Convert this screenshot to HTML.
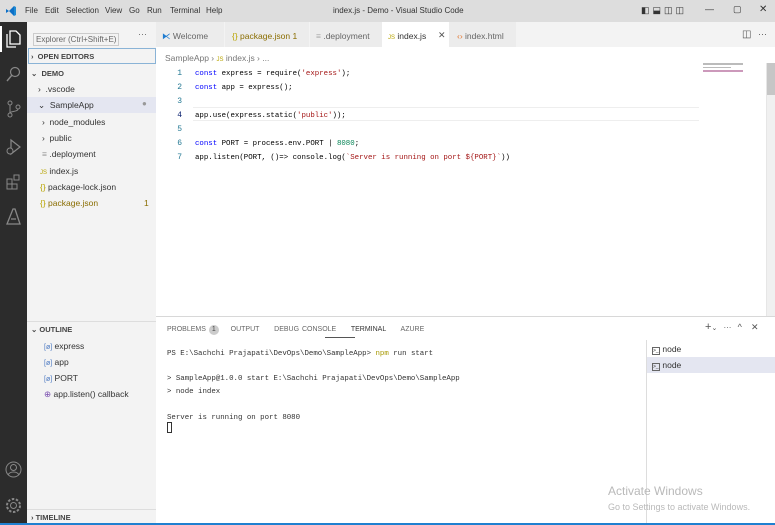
<!DOCTYPE html><html><head><style>
*{margin:0;padding:0;box-sizing:border-box}
body{width:775px;height:525px;overflow:hidden;background:#fff;font-family:"Liberation Sans",sans-serif;font-size:9px;color:#333;position:relative}
.a{position:absolute;white-space:nowrap}
.mono{font-family:"Liberation Mono",monospace;font-size:7.4px}
.kw{color:#0000ff}.str{color:#a31515}.num{color:#098658}
.m{position:absolute;top:6px;font-size:8px;color:#333}
</style></head><body>
<!-- title bar -->
<div class="a" style="left:0;top:0;width:775px;height:22px;background:#dddddd"></div>
<svg class="a" style="left:5px;top:5px" width="12" height="12" viewBox="0 0 12 12"><path d="M9 1L4 6l5 5V1zM1 4l3 2-3 2z" fill="#0b6fc7"/><path d="M9 1l2 1v8l-2 1" fill="#1f8ad2"/></svg>
<span class="m" style="left:25px">File</span><span class="m" style="left:45px">Edit</span><span class="m" style="left:66px">Selection</span><span class="m" style="left:105px">View</span><span class="m" style="left:129px">Go</span><span class="m" style="left:147px">Run</span><span class="m" style="left:170px">Terminal</span><span class="m" style="left:206px">Help</span>
<div class="a" style="left:333px;top:6px;font-size:8px">index.js - Demo - Visual Studio Code</div>
<div class="a" style="left:641px;top:5px;font-size:9px;color:#333;letter-spacing:3px">◧⬓◫◫</div>
<div class="a" style="left:705px;top:4px;font-size:9px">—</div>
<div class="a" style="left:733px;top:4px;font-size:9px">▢</div>
<div class="a" style="left:759px;top:4px;font-size:10px">✕</div>
<!-- activity bar -->
<div class="a" style="left:0;top:22px;width:27px;height:503px;background:#2c2c2c"></div>
<div class="a" style="left:0;top:26px;width:2px;height:26px;background:#fff"></div>
<svg class="a" style="left:6px;top:30px" width="15" height="18"><path d="M4 1h6l4 4v9H4z M1 4v13h9" fill="none" stroke="#fff" stroke-width="1.3"/></svg>
<svg class="a" style="left:6px;top:66px" width="15" height="16"><circle cx="9" cy="6" r="4.5" fill="none" stroke="#888" stroke-width="1.2"/><path d="M6 9l-5 6" stroke="#888" stroke-width="1.4"/></svg>
<svg class="a" style="left:6px;top:100px" width="15" height="18"><circle cx="4" cy="3" r="2" fill="none" stroke="#888"/><circle cx="4" cy="15" r="2" fill="none" stroke="#888"/><circle cx="12" cy="7" r="2" fill="none" stroke="#888"/><path d="M4 5v8M12 9c0 3-8 2-8 4" fill="none" stroke="#888"/></svg>
<svg class="a" style="left:6px;top:138px" width="15" height="18"><path d="M5 2l9 7-9 7z" fill="none" stroke="#888" stroke-width="1.2"/><circle cx="4" cy="13" r="3" fill="#2c2c2c" stroke="#888"/></svg>
<svg class="a" style="left:6px;top:174px" width="15" height="16"><path d="M1 5h5v5H1zM1 10h5v5H1zM6 10h5v5H6zM8 1h5v5H8z" fill="none" stroke="#888"/></svg>
<svg class="a" style="left:6px;top:208px" width="15" height="18"><path d="M1 16L7 1h2l5 15zM5 11h5" fill="none" stroke="#888" stroke-width="1.3"/></svg>
<svg class="a" style="left:5px;top:461px" width="17" height="17"><circle cx="8.5" cy="8.5" r="7.5" fill="none" stroke="#888"/><circle cx="8.5" cy="6.5" r="3" fill="none" stroke="#888"/><path d="M3 14c2-4 9-4 11 0" fill="none" stroke="#888"/></svg>
<svg class="a" style="left:5px;top:497px" width="17" height="17"><circle cx="8.5" cy="8.5" r="3" fill="none" stroke="#888"/><circle cx="8.5" cy="8.5" r="6.5" fill="none" stroke="#888" stroke-dasharray="2.5 1.6" stroke-width="2"/></svg>
<!-- sidebar -->
<div class="a" style="left:27px;top:22px;width:129px;height:503px;background:#f3f3f3"></div>
<div class="a" style="left:33px;top:33px;font-size:8px;color:#666;background:#f3f3f3;border:1px solid #ccc;padding:1px 2px">Explorer (Ctrl+Shift+E)</div>
<div class="a" style="left:138px;top:29px;color:#666">···</div>
<div class="a" style="left:28px;top:48px;width:128px;height:16px;border:1px solid #8ab3d6"></div>
<div class="a" style="left:31px;top:52px;font-size:7.5px;font-weight:bold;color:#444">›&nbsp; OPEN EDITORS</div>
<div class="a" style="left:31px;top:69px;font-size:7.5px;font-weight:bold;color:#444">⌄&nbsp; DEMO</div>
<div class="a" style="left:38px;top:84px;font-size:8.5px">›&nbsp; .vscode</div>
<div class="a" style="left:27px;top:97px;width:129px;height:16px;background:#e4e6f1"></div>
<div class="a" style="left:38px;top:100px;font-size:8.5px">⌄&nbsp; SampleApp</div>
<div class="a" style="left:142px;top:99px;font-size:8px;color:#999">●</div>
<div class="a" style="left:42px;top:117px;font-size:8.5px">›&nbsp; node_modules</div>
<div class="a" style="left:42px;top:133px;font-size:8.5px">›&nbsp; public</div>
<div class="a" style="left:42px;top:149px;font-size:8.5px"><span style="color:#999">≡</span> .deployment</div>
<div class="a" style="left:40px;top:166px;font-size:8.5px"><span style="color:#b8a400;font-size:6px">JS</span> index.js</div>
<div class="a" style="left:40px;top:182px;font-size:8.5px"><span style="color:#b8a400">{}</span> package-lock.json</div>
<div class="a" style="left:40px;top:198px;font-size:8.5px;color:#8a6d00"><span style="color:#b8a400">{}</span> package.json</div>
<div class="a" style="left:144px;top:198px;font-size:8.5px;color:#8a6d00">1</div>
<div class="a" style="left:27px;top:321px;width:129px;height:1px;background:#ddd"></div>
<div class="a" style="left:31px;top:325px;font-size:7.5px;font-weight:bold;color:#444">⌄ OUTLINE</div>
<div class="a" style="left:44px;top:341px;font-size:8.5px"><span style="color:#4d7ac2;font-size:7px">[ø]</span> express</div>
<div class="a" style="left:44px;top:357px;font-size:8.5px"><span style="color:#4d7ac2;font-size:7px">[ø]</span> app</div>
<div class="a" style="left:44px;top:373px;font-size:8.5px"><span style="color:#4d7ac2;font-size:7px">[ø]</span> PORT</div>
<div class="a" style="left:44px;top:389px;font-size:8.5px"><span style="color:#7a4fb0">⊕</span> app.listen() callback</div>
<div class="a" style="left:27px;top:509px;width:129px;height:1px;background:#ddd"></div>
<div class="a" style="left:31px;top:513px;font-size:7.5px;font-weight:bold;color:#444">› TIMELINE</div>
<!-- tabs -->
<div class="a" style="left:156px;top:22px;width:619px;height:25px;background:#f3f3f3"></div>
<div class="a" style="left:156px;top:22px;width:69px;height:25px;background:#ececec;border-right:1px solid #f3f3f3"></div>
<div class="a" style="left:162px;top:31px;font-size:8.5px;color:#666"><span style="color:#1f7cd0">⧔</span> Welcome</div>
<div class="a" style="left:225px;top:22px;width:85px;height:25px;background:#ececec;border-right:1px solid #f3f3f3"></div>
<div class="a" style="left:232px;top:31px;font-size:8.5px;color:#8a6d00"><span style="color:#b8a400">{}</span> package.json 1</div>
<div class="a" style="left:310px;top:22px;width:72px;height:25px;background:#ececec"></div>
<div class="a" style="left:316px;top:31px;font-size:8.5px;color:#666"><span style="color:#aaa">≡</span> .deployment</div>
<div class="a" style="left:382px;top:22px;width:67px;height:25px;background:#fff"></div>
<div class="a" style="left:388px;top:31px;font-size:8.5px;color:#333"><span style="color:#b8a400;font-size:6px">JS</span> index.js</div>
<div class="a" style="left:438px;top:30px;font-size:9px;color:#555">✕</div>
<div class="a" style="left:449px;top:22px;width:67px;height:25px;background:#ececec"></div>
<div class="a" style="left:457px;top:31px;font-size:8.5px;color:#666"><span style="color:#e37933">‹›</span> index.html</div>
<div class="a" style="left:742px;top:29px;font-size:10px;color:#555">◫</div>
<div class="a" style="left:758px;top:29px;color:#555">···</div>
<!-- editor -->
<div class="a" style="left:165px;top:53px;font-size:8.5px;color:#777">SampleApp › <span style="color:#b8a400;font-size:6px">JS</span> index.js › ...</div>
<div class="a mono" style="left:174px;top:67px;line-height:14px;color:#237893;text-align:right;width:8px;font-size:8px">1<br>2<br>3<br><span style="color:#0b216f">4</span><br>5<br>6<br>7</div>
<div class="a" style="left:193px;top:107px;width:506px;height:14px;border-top:1px solid #eee;border-bottom:1px solid #eee"></div>
<div class="a mono" style="left:195px;top:67px;line-height:14px;color:#000">
<span class="kw">const</span> express = require(<span class="str">'express'</span>);<br>
<span class="kw">const</span> app = express();<br><br>
app.use(express.static(<span class="str">'public'</span>));<br><br>
<span class="kw">const</span> PORT = process.env.PORT | <span class="num">8080</span>;<br>
app.listen(PORT, ()=&gt; console.log(<span class="str">`Server is running on port ${PORT}`</span>))</div>
<div class="a" style="left:703px;top:63px;width:40px;height:2px;background:#bbb"></div>
<div class="a" style="left:703px;top:67px;width:28px;height:1px;background:#bbb"></div>
<div class="a" style="left:703px;top:70px;width:40px;height:2px;background:#c9b"></div>
<div class="a" style="left:766px;top:63px;width:9px;height:253px;background:#f0f0f0;border-left:1px solid #e6e6e6"></div>
<div class="a" style="left:767px;top:63px;width:8px;height:32px;background:#c6c6c6"></div>
<!-- panel -->
<div class="a" style="left:156px;top:316px;width:619px;height:1px;background:#d8d8d8"></div>
<div class="a" style="left:167px;top:325px;font-size:7px;color:#666;word-spacing:1px">PROBLEMS <span style="display:inline-block;width:10px;height:10px;border-radius:5px;background:#ccc;color:#444;text-align:center;line-height:10px">1</span>&nbsp;&nbsp;&nbsp; OUTPUT&nbsp;&nbsp;&nbsp;&nbsp; DEBUG CONSOLE&nbsp;&nbsp;&nbsp;&nbsp; <span style="color:#333">TERMINAL</span>&nbsp;&nbsp;&nbsp;&nbsp; AZURE</div>
<div class="a" style="left:325px;top:337px;width:30px;height:1px;background:#555"></div>
<div class="a" style="left:705px;top:321px;font-size:11px;color:#555">+<span style="font-size:7px">⌄</span>&nbsp; <span style="font-size:8px">···</span>&nbsp; <span style="font-size:9px">^</span>&nbsp;&nbsp; <span style="font-size:9px">✕</span></div>
<div class="a mono" style="left:167px;top:348px;line-height:12.7px;color:#333">PS E:\Sachchi Prajapati\DevOps\Demo\SampleApp&gt; <span style="color:#a69800">npm</span> run start<br><br>&gt; SampleApp@1.0.0 start E:\Sachchi Prajapati\DevOps\Demo\SampleApp<br>&gt; node index<br><br>Server is running on port 8080</div>
<div class="a" style="left:167px;top:422px;width:5px;height:11px;border:1px solid #333"></div>
<div class="a" style="left:646px;top:340px;width:1px;height:185px;background:#ddd"></div>
<div class="a" style="left:647px;top:357px;width:128px;height:16px;background:#e4e6f1"></div>
<div class="a" style="left:652px;top:344px;font-size:8.5px"><span style="display:inline-block;width:8px;height:8px;border:1px solid #666;font-size:5px;line-height:6px">&gt;_</span> node</div>
<div class="a" style="left:652px;top:360px;font-size:8.5px"><span style="display:inline-block;width:8px;height:8px;border:1px solid #666;font-size:5px;line-height:6px">&gt;_</span> node</div>
<div class="a" style="left:608px;top:484px;font-size:12px;color:#b9b9b9">Activate Windows</div>
<div class="a" style="left:608px;top:502px;font-size:9px;color:#b9b9b9">Go to Settings to activate Windows.</div>
<div class="a" style="left:0;top:523px;width:775px;height:2px;background:#1f80d0"></div>
</body></html>
